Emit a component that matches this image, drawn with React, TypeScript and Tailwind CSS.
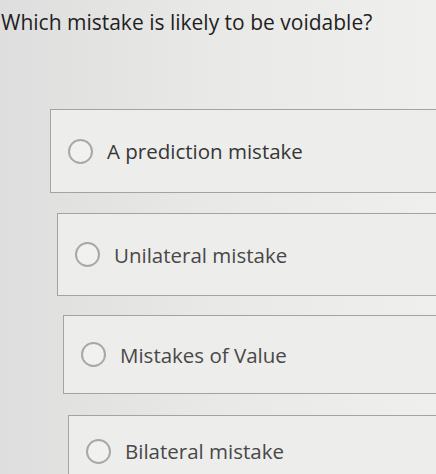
const options = [
  { label: "A prediction mistake", box: "ml-[50px] h-[84px] mt-[72px]", text: "text-[#363636]" },
  { label: "Unilateral mistake", box: "ml-[57px] h-[83px] mt-[20px]", text: "text-[#484848]" },
  { label: "Mistakes of Value", box: "ml-[63px] h-[79px] mt-[19px]", text: "text-[#484848]" },
  { label: "Bilateral mistake", box: "ml-[68px] h-[72px] mt-[21px]", text: "text-[#484848]" },
];

export default function App() {
  return (
    <div
      className="w-[436px] h-[474px] overflow-hidden bg-gradient-to-r from-[#dedede] via-[#e9e9e7] to-[#efefed]"
      style={{ fontFamily: '"Open Sans", sans-serif' }}
    >
      <h1 className="pt-[7px] pl-[1px] text-[21px] leading-[30px] font-medium text-[#1f1f1f] whitespace-nowrap">
        Which mistake is likely to be voidable?
      </h1>
      <div className="flex flex-col">
        {options.map((o) => (
          <label
            key={o.label}
            className={`${o.box} shrink-0 flex items-center gap-[14px] pl-[17px] border border-[#a3a3a3] border-r-0 bg-[#ededeb] cursor-pointer`}
          >
            <span className="w-[25px] h-[25px] rounded-full border-2 border-[#a8a8a8] bg-[#f1f1ef] shrink-0" />
            <span className={`text-[20.5px] leading-[28px] ${o.text} whitespace-nowrap`}>{o.label}</span>
          </label>
        ))}
      </div>
    </div>
  );
}
